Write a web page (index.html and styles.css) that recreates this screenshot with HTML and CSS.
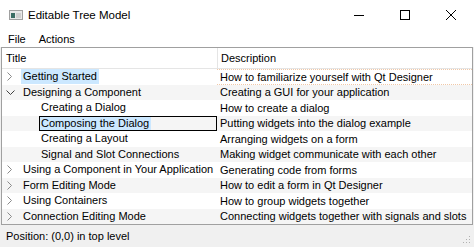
FILE: index.html
```html
<!DOCTYPE html>
<html lang="en">
<head>
    <meta charset="UTF-8">
    <title>Editable Tree Model</title>
    <link rel="stylesheet" href="styles.css">
</head>
<body>
    <div class="window">
        <!-- Title bar -->
        <div class="titlebar">
            <svg class="app-icon" width="14" height="10" viewBox="0 0 14 10">
                <rect x="0.5" y="0.5" width="13" height="9" fill="#e8e8e8" stroke="#a0a0a0"/>
                <rect x="2" y="3" width="4" height="5" fill="#3b6d64"/>
                <rect x="7" y="3" width="5" height="5" fill="#cfcfcf"/>
            </svg>
            <span class="title">Editable Tree Model</span>
            <div class="controls">
                <svg width="46" height="30" viewBox="0 0 46 30"><line x1="18" y1="15.5" x2="28" y2="15.5" stroke="#000"/></svg>
                <svg width="46" height="30" viewBox="0 0 46 30"><rect x="18.5" y="10.5" width="9" height="9" fill="none" stroke="#000"/></svg>
                <svg width="46" height="30" viewBox="0 0 46 30"><path d="M18 10 L28 20 M28 10 L18 20" stroke="#000"/></svg>
            </div>
        </div>

        <!-- Menu bar -->
        <div class="menubar">
            <span class="menu">File</span>
            <span class="menu">Actions</span>
        </div>

        <!-- Tree view -->
        <div class="tree">
            <div class="header">
                <div class="hcell">Title</div>
                <div class="hcell">Description</div>
            </div>
            <div class="rows">
                <div class="row current">
                    <div class="cell lvl0">
                        <svg class="arrow" width="16" height="15" viewBox="0 0 16 15"><path d="M5.5 3.5 L9.5 7.5 L5.5 11.5" fill="none" stroke="#8a8a8a"/></svg>
                        <span class="text selected">Getting Started</span>
                    </div>
                    <div class="cell desc">How to familiarize yourself with Qt Designer</div>
                </div>
                <div class="row alt">
                    <div class="cell lvl0">
                        <svg class="arrow" width="16" height="15" viewBox="0 0 16 15"><path d="M4.5 5.5 L8.5 9.5 L12.5 5.5" fill="none" stroke="#404040"/></svg>
                        <span class="text">Designing a Component</span>
                    </div>
                    <div class="cell desc">Creating a GUI for your application</div>
                </div>
                <div class="row">
                    <div class="cell lvl1"><span class="text">Creating a Dialog</span></div>
                    <div class="cell desc">How to create a dialog</div>
                </div>
                <div class="row alt">
                    <div class="cell lvl1"><span class="focus-box"><span class="text selected">Composing the Dialog</span></span></div>
                    <div class="cell desc">Putting widgets into the dialog example</div>
                </div>
                <div class="row">
                    <div class="cell lvl1"><span class="text">Creating a Layout</span></div>
                    <div class="cell desc">Arranging widgets on a form</div>
                </div>
                <div class="row alt">
                    <div class="cell lvl1"><span class="text">Signal and Slot Connections</span></div>
                    <div class="cell desc">Making widget communicate with each other</div>
                </div>
                <div class="row">
                    <div class="cell lvl0">
                        <svg class="arrow" width="16" height="15" viewBox="0 0 16 15"><path d="M5.5 3.5 L9.5 7.5 L5.5 11.5" fill="none" stroke="#8a8a8a"/></svg>
                        <span class="text">Using a Component in Your Application</span>
                    </div>
                    <div class="cell desc">Generating code from forms</div>
                </div>
                <div class="row alt">
                    <div class="cell lvl0">
                        <svg class="arrow" width="16" height="15" viewBox="0 0 16 15"><path d="M5.5 3.5 L9.5 7.5 L5.5 11.5" fill="none" stroke="#8a8a8a"/></svg>
                        <span class="text">Form Editing Mode</span>
                    </div>
                    <div class="cell desc">How to edit a form in Qt Designer</div>
                </div>
                <div class="row">
                    <div class="cell lvl0">
                        <svg class="arrow" width="16" height="15" viewBox="0 0 16 15"><path d="M5.5 3.5 L9.5 7.5 L5.5 11.5" fill="none" stroke="#8a8a8a"/></svg>
                        <span class="text">Using Containers</span>
                    </div>
                    <div class="cell desc">How to group widgets together</div>
                </div>
                <div class="row alt">
                    <div class="cell lvl0">
                        <svg class="arrow" width="16" height="15" viewBox="0 0 16 15"><path d="M5.5 3.5 L9.5 7.5 L5.5 11.5" fill="none" stroke="#8a8a8a"/></svg>
                        <span class="text">Connection Editing Mode</span>
                    </div>
                    <div class="cell desc">Connecting widgets together with signals and slots</div>
                </div>
            </div>
        </div>

        <!-- Status bar -->
        <div class="statusbar">
            <span>Position: (0,0) in top level</span>
            <svg class="grip" width="8" height="8" viewBox="0 0 8 8">
                <rect x="6" y="0" width="1" height="1" fill="#b0b0b0"/>
                <rect x="3" y="3" width="1" height="1" fill="#b0b0b0"/>
                <rect x="6" y="3" width="1" height="1" fill="#b0b0b0"/>
                <rect x="0" y="6" width="1" height="1" fill="#b0b0b0"/>
                <rect x="3" y="6" width="1" height="1" fill="#b0b0b0"/>
                <rect x="6" y="6" width="1" height="1" fill="#b0b0b0"/>
            </svg>
        </div>
    </div>
</body>
</html>
```

FILE: styles.css
```css
body {
    margin: 0;
    padding: 0;
    font-family: "Liberation Sans", Arial, sans-serif;
    font-size: 11px;
    color: #000000;
    background: #f0f0f0;
}
.window {
    width: 474px;
    height: 247px;
    display: flex;
    flex-direction: column;
    overflow: hidden;
}
.titlebar {
    height: 30px;
    background: #ffffff;
    display: flex;
    align-items: center;
    flex-shrink: 0;
}
.app-icon {
    margin-left: 9px;
    margin-right: 5px;
    flex-shrink: 0;
}
.title {
    flex: 1;
    font-size: 11.5px;
}
.controls {
    display: flex;
}
.controls svg {
    display: block;
}
.menubar {
    height: 17px;
    background: #ffffff;
    display: flex;
    align-items: center;
    flex-shrink: 0;
}
.menu {
    padding-left: 8px;
    padding-right: 9px;
}
.menu + .menu {
    padding-left: 4px;
}
.tree {
    margin: 0 1px;
    border: 1px solid #a0a0a0;
    background: #ffffff;
    flex: 1;
    display: flex;
    flex-direction: column;
    overflow: hidden;
}
.header {
    display: grid;
    grid-template-columns: 215px 1fr;
    height: 20px;
    border-bottom: 1px solid #e5e5e5;
}
.hcell {
    display: flex;
    align-items: center;
    padding-left: 4px;
}
.hcell + .hcell {
    border-left: 1px solid #e5e5e5;
    padding-left: 3px;
}
.row {
    display: grid;
    grid-template-columns: 215px 1fr;
    height: 15.5px;
}
.row.alt {
    background: #f5f5f5;
}
.row.current .desc {
    border-top: 1px dotted #f0c8a8;
    border-bottom: 1px dotted #f0c8a8;
}
.cell {
    display: flex;
    align-items: center;
    white-space: nowrap;
    overflow: hidden;
    box-sizing: border-box;
    min-width: 0;
}
.arrow {
    flex-shrink: 0;
    margin-right: 3px;
}
.lvl1 {
    padding-left: 37px;
}
.text {
    padding: 0 2px;
    line-height: 15px;
    flex-shrink: 0;
}
.text.selected {
    background: #cce8ff;
}
.focus-box {
    flex: 1;
    display: flex;
    align-self: stretch;
    box-sizing: border-box;
    border: 1px solid #000000;
    align-items: stretch;
}
.focus-box .text {
    padding-left: 1px;
    line-height: 13px;
}
.desc {
    padding-left: 3px;
}
.statusbar {
    height: 22px;
    flex-shrink: 0;
    display: flex;
    align-items: center;
    justify-content: space-between;
    padding-left: 6px;
    padding-right: 3px;
}
.grip {
    align-self: flex-end;
    margin-bottom: 3px;
}
```
